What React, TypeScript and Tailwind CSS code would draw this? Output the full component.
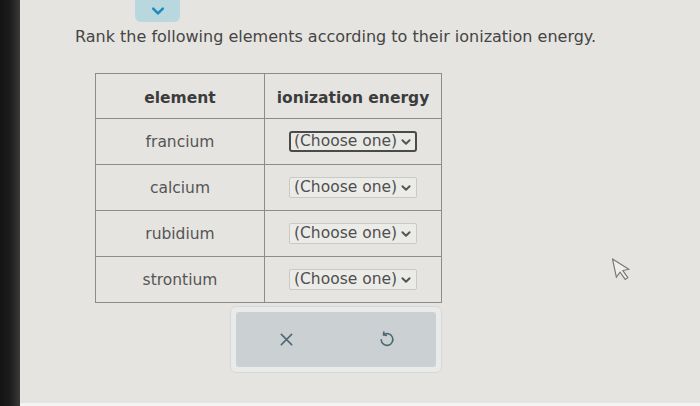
import React from "react";

const rows = ["francium", "calcium", "rubidium", "strontium"];

function Chevron({ className }: { className?: string }) {
  return (
    <svg viewBox="0 0 10 10" className={className} fill="none" stroke="currentColor" strokeWidth={1.6}>
      <path d="M2 3.5 L5 6.5 L8 3.5" strokeLinecap="round" strokeLinejoin="round" />
    </svg>
  );
}

function ChooseOne({ focused }: { focused?: boolean }) {
  return (
    <div
      className={
        focused
          ? "flex h-[21px] w-[128px] items-center justify-between rounded-[3px] border-2 border-[#4a4a4a] bg-[#e9e9e6] pl-[3px] pr-[3px]"
          : "flex h-[21px] w-[128px] items-center justify-between rounded-[2px] border border-[#c9c9c6] bg-[#ebebe8] pl-[4px] pr-[4px]"
      }
    >
      <span className="text-[15.5px] leading-none text-[#4f4f4f]">(Choose one)</span>
      <Chevron className="h-[12px] w-[12px] text-[#555]" />
    </div>
  );
}

export default function App() {
  return (
    <div
      className="flex h-[406px] w-[700px] overflow-hidden bg-[#e5e4e0] text-[#4a4a4a]"
      style={{ fontFamily: '"DejaVu Sans", Verdana, sans-serif' }}
    >
      <div className="h-full w-[20px] shrink-0 bg-gradient-to-r from-[#141414] via-[#1c1c1c] to-[#3a3a3a]" />
      <div className="relative flex flex-1 flex-col border-b-[3px] border-[#f4f4f2]">
        <div className="ml-[115px] flex h-[22px] w-[45px] items-center justify-center rounded-b-[6px] bg-[#b9d7df]">
          <Chevron className="h-[16px] w-[16px] text-[#1f8bbd]" />
        </div>
        <p className="ml-[55px] mt-[5px] text-[16px] leading-[20px] text-[#454545]">
          Rank the following elements according to their ionization energy.
        </p>

        <div className="ml-[75px] mt-[26px] w-[347px]">
          <table className="w-full border-collapse border border-[#8c8c8a] text-[15.5px]">
            <thead>
              <tr className="h-[45px]">
                <th className="w-[169px] border border-[#8c8c8a] pt-[5px] font-bold text-[#3c3c3c]">element</th>
                <th className="border border-[#8c8c8a] pt-[5px] font-bold text-[#3c3c3c]">ionization energy</th>
              </tr>
            </thead>
            <tbody>
              {rows.map((r, i) => (
                <tr key={r} className="h-[46px]">
                  <td className="border border-[#8c8c8a] pt-[3px] text-center text-[#555]">{r}</td>
                  <td className="border border-[#8c8c8a]">
                    <div className="flex justify-center">
                      <ChooseOne focused={i === 0} />
                    </div>
                  </td>
                </tr>
              ))}
            </tbody>
          </table>

          <div className="ml-[135px] mt-[3px] w-[212px] rounded-[6px] border border-[#d6d8d8] bg-[#e9eaea] p-[5px]">
            <div className="flex h-[55px] items-center justify-between rounded-[3px] bg-[#cbd1d3] pl-[43px] pr-[41px]">
              <svg viewBox="0 0 16 16" className="h-[15px] w-[15px] text-[#4e6876]" fill="none" stroke="currentColor" strokeWidth={1.6}>
                <path d="M2 2 L14 14 M14 2 L2 14" />
              </svg>
              <svg viewBox="0 0 16 16" className="h-[17px] w-[17px] text-[#4e6876]" fill="none" stroke="currentColor" strokeWidth={1.5} strokeLinecap="round" strokeLinejoin="round">
                <path d="M5.2 3.6 A5.5 5.5 0 1 1 3 8.2" />
                <path d="M5.5 1 L5.2 3.6 L7.8 4.2" />
              </svg>
            </div>
          </div>
        </div>

        <svg viewBox="0 0 14 24" className="absolute left-[592px] top-[256px] h-[28px] w-[20px]" fill="#efefec" stroke="#777" strokeWidth={1}>
          <path d="M1 1 L1 17 L5 13.5 L8 20.5 L10.5 19.5 L7.6 12.6 L12.8 12.6 Z" transform="rotate(-12 7 12)" />
        </svg>
      </div>
    </div>
  );
}
